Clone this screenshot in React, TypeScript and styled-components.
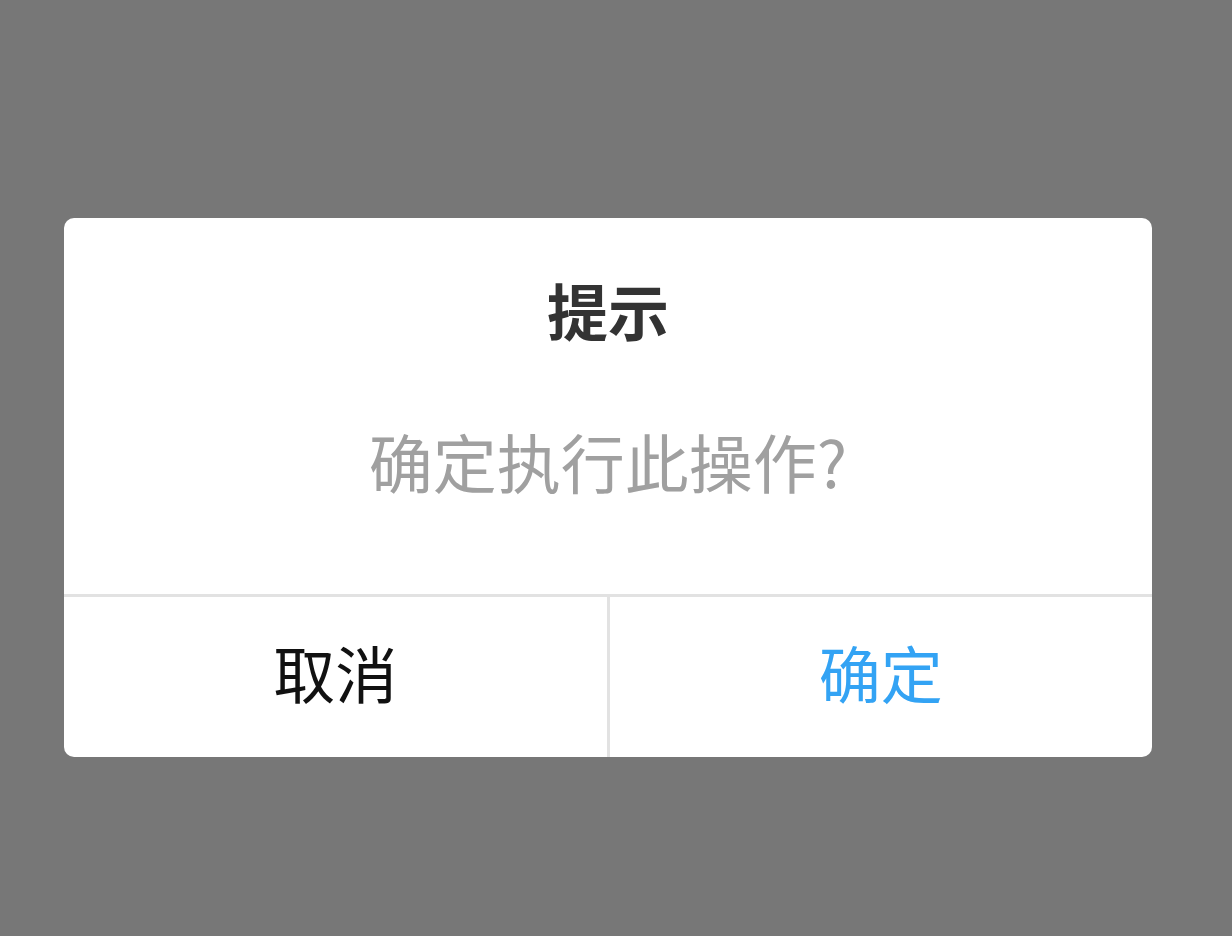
import React from "react";
import styled, { createGlobalStyle } from "styled-components";

const GlobalStyle = createGlobalStyle`
  html, body {
    margin: 0;
    padding: 0;
    background: #777777;
  }
  body {
    font-family: "Noto Sans CJK SC", "Noto Sans", sans-serif;
  }
`;

const Mask = styled.div`
  width: 100%;
  min-height: 100vh;
  box-sizing: border-box;
  padding: 218px 0 0 64px;
  background: #777777;
`;

const Dialog = styled.div`
  width: 1088px;
  background: #ffffff;
  border-radius: 10px;
  overflow: hidden;
  display: flex;
  flex-direction: column;
`;

const Body = styled.div`
  display: flex;
  flex-direction: column;
  align-items: center;
  padding: 56px 0 98px;
  gap: 78px;
`;

const Title = styled.div`
  font-size: 61px;
  line-height: 72px;
  font-weight: 700;
  color: #333333;
`;

const Message = styled.div`
  font-size: 64px;
  line-height: 72px;
  color: #a0a0a0;
`;

const Footer = styled.div`
  display: flex;
  border-top: 3px solid #e2e2e2;
  height: 160px;
`;

const ActionButton = styled.button<{ $primary?: boolean }>`
  flex: 1;
  border: none;
  background: transparent;
  padding: 0 0 10px;
  margin: 0;
  font-family: "Noto Sans CJK SC", "Noto Sans", sans-serif;
  font-size: 62px;
  color: ${(p) => (p.$primary ? "#33a3f4" : "#111111")};
  cursor: pointer;
  & + & {
    border-left: 3px solid #e2e2e2;
  }
`;

const App = () => {
  return (
    <>
      <GlobalStyle />
      <Mask>
        <Dialog>
          <Body>
            <Title>提示</Title>
            <Message>确定执行此操作?</Message>
          </Body>
          <Footer>
            <ActionButton>取消</ActionButton>
            <ActionButton $primary>确定</ActionButton>
          </Footer>
        </Dialog>
      </Mask>
    </>
  );
};

export default App;
